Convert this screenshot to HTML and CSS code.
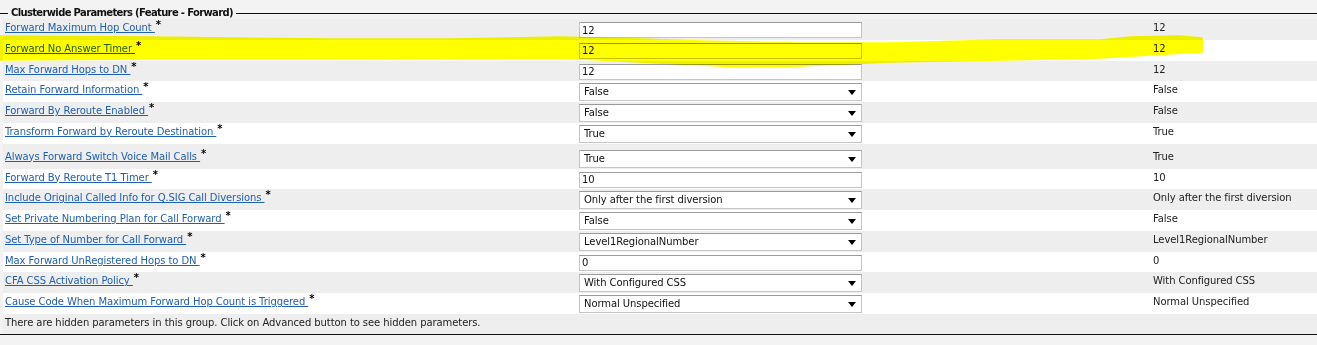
FILE: index.html
```html
<!DOCTYPE html>
<html lang="en">
<head>
    <meta charset="UTF-8">
    <title>Service Parameter Configuration</title>
    <link rel="stylesheet" href="styles.css">
</head>
<body>
    <fieldset class="param-group">
        <legend>Clusterwide Parameters (Feature - Forward)</legend>

        <div class="row">
            <div class="label"><a href="#">Forward Maximum Hop Count </a><span class="req">*</span></div>
            <div class="field"><input class="text" type="text" value="12"></div>
            <div class="value">12</div>
        </div>
        <div class="row">
            <div class="label"><a href="#">Forward No Answer Timer </a><span class="req">*</span></div>
            <div class="field"><input class="text" type="text" value="12"></div>
            <div class="value">12</div>
        </div>
        <div class="row">
            <div class="label"><a href="#">Max Forward Hops to DN </a><span class="req">*</span></div>
            <div class="field"><input class="text" type="text" value="12"></div>
            <div class="value">12</div>
        </div>
        <div class="row">
            <div class="label"><a href="#">Retain Forward Information </a><span class="req">*</span></div>
            <div class="field"><span class="select"><select><option>False</option><option>True</option></select></span></div>
            <div class="value">False</div>
        </div>
        <div class="row">
            <div class="label"><a href="#">Forward By Reroute Enabled </a><span class="req">*</span></div>
            <div class="field"><span class="select"><select><option>False</option><option>True</option></select></span></div>
            <div class="value">False</div>
        </div>
        <div class="row">
            <div class="label"><a href="#">Transform Forward by Reroute Destination </a><span class="req">*</span></div>
            <div class="field"><span class="select"><select><option>True</option><option>False</option></select></span></div>
            <div class="value">True</div>
        </div>
        <div class="row tall">
            <div class="label"><a href="#">Always Forward Switch Voice Mail Calls </a><span class="req">*</span></div>
            <div class="field"><span class="select"><select><option>True</option><option>False</option></select></span></div>
            <div class="value">True</div>
        </div>
        <div class="row">
            <div class="label"><a href="#">Forward By Reroute T1 Timer </a><span class="req">*</span></div>
            <div class="field"><input class="text" type="text" value="10"></div>
            <div class="value">10</div>
        </div>
        <div class="row">
            <div class="label"><a href="#">Include Original Called Info for Q.SIG Call Diversions </a><span class="req">*</span></div>
            <div class="field"><span class="select"><select><option>Only after the first diversion</option></select></span></div>
            <div class="value">Only after the first diversion</div>
        </div>
        <div class="row">
            <div class="label"><a href="#">Set Private Numbering Plan for Call Forward </a><span class="req">*</span></div>
            <div class="field"><span class="select"><select><option>False</option><option>True</option></select></span></div>
            <div class="value">False</div>
        </div>
        <div class="row">
            <div class="label"><a href="#">Set Type of Number for Call Forward </a><span class="req">*</span></div>
            <div class="field"><span class="select"><select><option>Level1RegionalNumber</option></select></span></div>
            <div class="value">Level1RegionalNumber</div>
        </div>
        <div class="row">
            <div class="label"><a href="#">Max Forward UnRegistered Hops to DN </a><span class="req">*</span></div>
            <div class="field"><input class="text" type="text" value="0"></div>
            <div class="value">0</div>
        </div>
        <div class="row">
            <div class="label"><a href="#">CFA CSS Activation Policy </a><span class="req">*</span></div>
            <div class="field"><span class="select"><select><option>With Configured CSS</option></select></span></div>
            <div class="value">With Configured CSS</div>
        </div>
        <div class="row">
            <div class="label"><a href="#">Cause Code When Maximum Forward Hop Count is Triggered </a><span class="req">*</span></div>
            <div class="field"><span class="select"><select><option>Normal Unspecified</option></select></span></div>
            <div class="value">Normal Unspecified</div>
        </div>
        <div class="row note">There are hidden parameters in this group. Click on Advanced button to see hidden parameters.</div>
    </fieldset>

    <!-- highlighter stroke over the second row -->
    <svg class="marker" width="1317" height="345" viewBox="0 0 1317 345">
        <path d="M0,36 L150,37 L330,39 L450,39 L560,37 L640,39 L700,41 L800,43 L890,43 L1000,40 L1100,40 L1130,37 L1180,36 L1202,38 L1203,45 L1202,52 L1150,55 L1100,58 L1000,60 L890,62 L800,66 L740,67 L660,63 L560,58 L330,59 L150,59 L0,60 Z" fill="#ffff00" stroke="#ffff00" stroke-width="1.5" stroke-linejoin="round"/>
    </svg>
</body>
</html>
```

FILE: styles.css
```css
body {
    margin: 0;
    background-color: #f3f3f3;
    font-family: "DejaVu Sans", Verdana, sans-serif;
    font-size: 10px;
    line-height: 12px;
    letter-spacing: -0.08px;
    color: #222;
    position: relative;
    height: 345px;
    overflow: hidden;
}
.param-group {
    margin: 7px 0 0 0;
    padding: 0 0 0 3px;
    border: none;
    border-top: 1px solid #111;
    border-bottom: 1px solid #111;
    min-width: 0;
}
.param-group legend {
    margin-left: 5px;
    padding: 0 3px;
    font-weight: bold;
    color: #111;
    letter-spacing: -0.65px;
}
.row {
    display: grid;
    grid-template-columns: 576px 574px 1fr;
    height: 20.75px;
    background-color: #fff;
}
.row:nth-child(even) {
    background-color: #eeeeee;
}
.row.tall {
    height: 25px;
    padding-top: 4px;
    box-sizing: border-box;
}
.label {
    padding: 3px 0 0 2px;
    white-space: nowrap;
}
.label a {
    color: #1f5fae;
    text-decoration: underline;
}
.req {
    font-size: 10px;
    font-weight: bold;
    color: #000;
    position: relative;
    top: -3px;
    margin-left: 1px;
}
.value {
    padding-top: 3px;
}
.field {
    padding-top: 3px;
}
.text,
.select select {
    font: inherit;
    letter-spacing: inherit;
    color: #111;
    box-sizing: border-box;
    width: 283px;
    margin: 0;
    background: #fff;
    border: 1px solid #c4c4c4;
    border-top-color: #9a9a9a;
    border-radius: 0;
    outline: none;
}
.text {
    height: 16px;
    padding: 0 2px;
}
.select {
    display: inline-block;
    position: relative;
    margin-top: -1px;
}
.select select {
    display: block;
    height: 18px;
    padding: 0 0 0 4px;
    -webkit-appearance: none;
    appearance: none;
}
.select::after {
    content: "";
    position: absolute;
    right: 6px;
    top: 7px;
    border-left: 4px solid transparent;
    border-right: 4px solid transparent;
    border-top: 5px solid #000;
}
.note {
    display: block;
    height: 20px;
    padding: 3px 0 0 2px;
    box-sizing: border-box;
}
.marker {
    position: absolute;
    left: 0;
    top: 0;
    pointer-events: none;
    mix-blend-mode: multiply;
}
```
